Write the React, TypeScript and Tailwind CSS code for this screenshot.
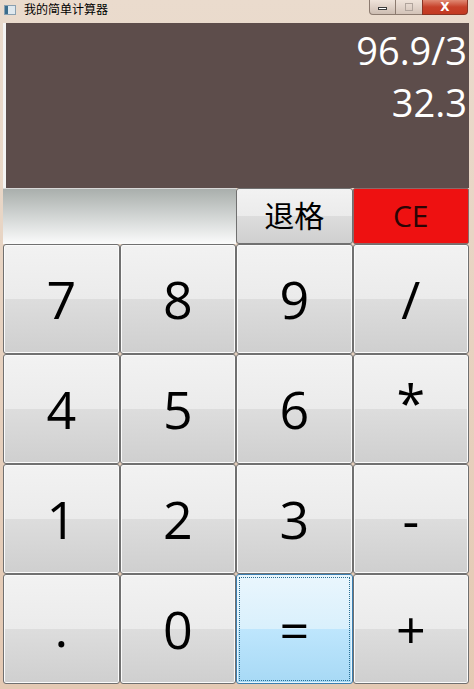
import React from "react";

const font = { fontFamily: '"Open Sans", "Noto Sans CJK SC", sans-serif' };

const keys = ["7", "8", "9", "/", "4", "5", "6", "*", "1", "2", "3", "-", ".", "0", "=", "+"];

function Key({ label }: { label: string }) {
  const isEq = label === "=";
  const base =
    "relative flex items-center justify-center rounded-[3px] border text-[52px] leading-none text-black";
  const skin = isEq
    ? "border-[#3c7fb1] bg-[linear-gradient(to_bottom,#eaf6fd_0%,#d9f0fc_50%,#bee6fd_50%,#a7d9f5_100%)] shadow-[inset_0_0_0_1px_#e8f6fd]"
    : "border-[#707070] bg-[linear-gradient(to_bottom,#f2f2f2_0%,#ebebeb_50%,#dddddd_50%,#cfcfcf_100%)] shadow-[inset_0_0_0_1px_#fbfbfb]";
  return (
    <div className={`${base} ${skin}`}>
      {isEq && <div className="absolute inset-[2px] border border-dotted border-[#2a6f93]" />}
      <span className={label === "*" ? "-mt-[14px]" : label === "." ? "-mt-[4px]" : ""}>{label}</span>
    </div>
  );
}

export default function App() {
  return (
    <div
      className="flex h-[689px] w-[474px] flex-col overflow-hidden bg-[linear-gradient(to_bottom,#eadbcd,#e4c9b3)]"
      style={font}
    >
      {/* title bar */}
      <div className="flex h-[23px] items-start">
        <div className="ml-[4px] mt-[5px] h-[10px] w-[12px] border border-[#8aa0b0] bg-[linear-gradient(to_right,#3b6d8c_0%,#3b6d8c_35%,#dfe8ee_35%)]" />
        <span className="ml-[8px] mt-[2px] text-[12px] leading-[16px] text-black">我的简单计算器</span>
        <div className="ml-auto mr-[6px] flex h-[15px]">
          <div className="flex w-[27px] items-center justify-center rounded-bl-[4px] border border-t-0 border-[#8c7b70] bg-[linear-gradient(to_bottom,#efe3da,#cdbdb2)]">
            <div className="mt-[3px] h-[3px] w-[9px] border border-[#3b3b3b] bg-white" />
          </div>
          <div className="flex w-[26px] items-center justify-center border-b border-[#8c7b70] bg-[linear-gradient(to_bottom,#efe3da,#d3c3b8)]">
            <div className="h-[8px] w-[8px] border border-[#b0a49c]" />
          </div>
          <div className="flex w-[46px] items-center justify-center rounded-br-[4px] border border-t-0 border-[#8a3424] bg-[linear-gradient(to_bottom,#e08a74,#c7412a_50%,#c33a22)]">
            <span className="text-[12px] font-bold leading-none text-white" style={{ fontFamily: '"DejaVu Sans", sans-serif' }}>
              X
            </span>
          </div>
        </div>
      </div>

      {/* client area */}
      <div className="mx-[3px] flex w-[466px] flex-col">
        <div className="flex h-[165px] flex-col items-end border-l-[3px] border-[#f4f4f4] bg-[#5d4d4b] pr-[2px] pt-[1px] text-[38px] leading-[52px] text-white">
          <div>96.9/3</div>
          <div>32.3</div>
        </div>

        <div className="grid h-[56px] grid-cols-4">
          <div className="col-span-2 border-t border-[#d8d8d8] bg-[linear-gradient(to_bottom,#a9afac,#d6d9d8_55%,#fbfbfb)]" />
          <div className="flex items-center justify-center rounded-[3px] border border-[#707070] bg-[linear-gradient(to_bottom,#f2f2f2_0%,#ebebeb_50%,#dddddd_50%,#cfcfcf_100%)] text-[30px] leading-none text-black">
            退格
          </div>
          <div className="flex items-center justify-center rounded-[2px] border border-[#8a6a6a] bg-[#ee1111] text-[30px] leading-none text-[#2a0505]">
            CE
          </div>
        </div>

        <div className="grid h-[440px] grid-cols-4 grid-rows-4">
          {keys.map((k) => (
            <Key key={k} label={k} />
          ))}
        </div>
      </div>
    </div>
  );
}
